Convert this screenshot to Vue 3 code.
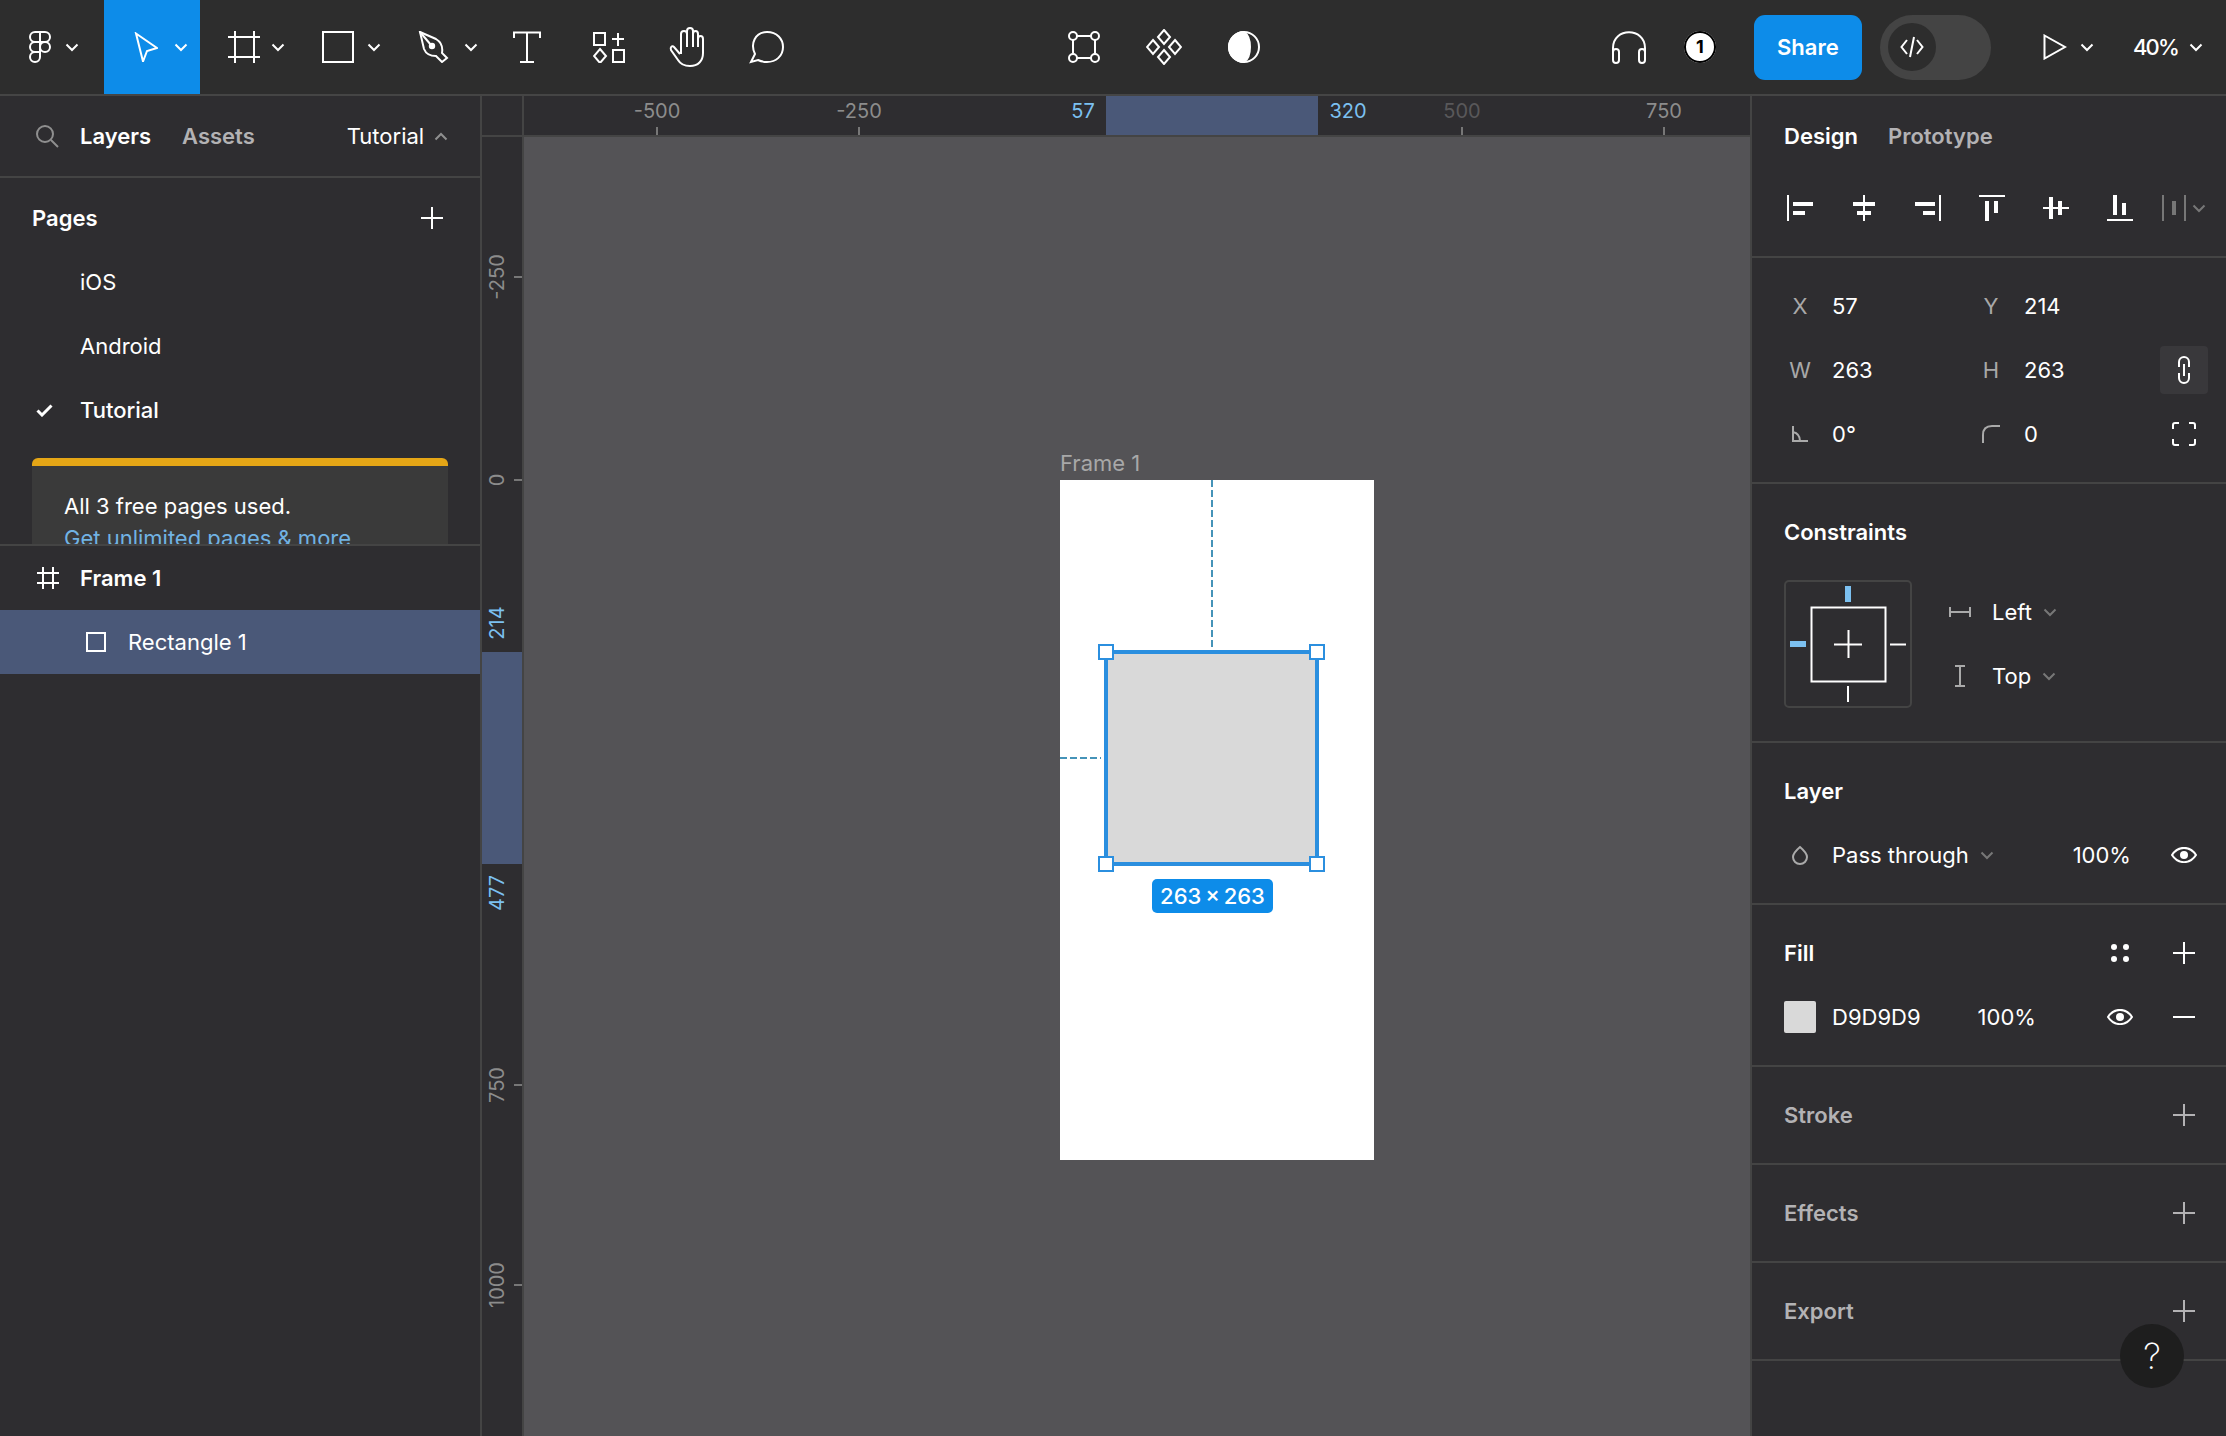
<script setup>
const hMarks = [
  { text: '-500', x: 657, tick: true },
  { text: '-250', x: 859, tick: true },
  { text: '57', x: 1083, tone: 'on' },
  { text: '320', x: 1348, tone: 'on' },
  { text: '500', x: 1462, tick: true, tone: 'dim' },
  { text: '750', x: 1664, tick: true },
]
const vMarks = [
  { text: '-250', y: 277, tick: true },
  { text: '0', y: 480, tick: true },
  { text: '214', y: 623, tone: 'on' },
  { text: '477', y: 893, tone: 'on' },
  { text: '750', y: 1085, tick: true },
  { text: '1000', y: 1285, tick: true },
]
const pages = ['iOS', 'Android', 'Tutorial']
const emptySections = ['Stroke', 'Effects', 'Export']
</script>

<template>
  <div class="app">
    <svg class="defs" width="0" height="0">
      <symbol id="chev" viewBox="0 0 14 9"><path d="M1.5 1.5 7 7l5.500-5.500" fill="none" stroke="currentColor" stroke-width="2" /></symbol>
      <symbol id="plus" viewBox="0 0 22 22"><path d="M11 0v22M0 11h22" fill="none" stroke="currentColor" stroke-width="2" /></symbol>
      <symbol id="eye" viewBox="0 0 26 16">
        <path d="M1 8c6-9.500 18-9.500 24 0-6 9.500-18 9.500-24 0z" fill="none" stroke="currentColor" stroke-width="2" />
        <circle cx="13" cy="8" r="4" fill="currentColor" />
      </symbol>
    </svg>

    <header class="toolbar">
      <div class="tools">
        <div class="tool t-logo">
          <svg class="ico" width="22" height="32" viewBox="0 0 22 32" fill="none" stroke="#fff" stroke-width="2">
            <path d="M11 1H6a5 5 0 0 0 0 10h5zM11 1h5a5 5 0 0 1 0 10h-5zM11 11H6a5 5 0 0 0 0 10h5z" />
            <circle cx="16" cy="16" r="5" />
            <path d="M6 21h5v5a5 5 0 1 1-5-5z" />
          </svg>
          <svg class="chev"><use href="#chev" /></svg>
        </div>
        <div class="tool t-move">
          <svg class="ico" width="24" height="30" viewBox="0 0 24 30" fill="none" stroke="#fff" stroke-width="2">
            <path d="M2 1.500 23 16l-10 3-4 10.500z" />
          </svg>
          <svg class="chev"><use href="#chev" /></svg>
        </div>
        <div class="tool t-frame">
          <svg class="ico" width="32" height="32" viewBox="0 0 32 32" fill="none" stroke="#fff" stroke-width="2">
            <path d="M7 0v32M26 0v32M0 6h32M0 26h32" />
          </svg>
          <svg class="chev"><use href="#chev" /></svg>
        </div>
        <div class="tool t-rect">
          <svg class="ico" width="32" height="32" viewBox="0 0 32 32" fill="none" stroke="#fff" stroke-width="2">
            <rect x="1" y="1" width="30" height="30" />
          </svg>
          <svg class="chev"><use href="#chev" /></svg>
        </div>
        <div class="tool t-pen">
          <svg class="ico" width="32" height="32" viewBox="0 0 32 32" fill="none" stroke="#fff" stroke-width="2">
            <path d="M2 1 18 8c5 3 7 8 6 14l5 5-5 4-6-6c-6 0-10-2-12-7z" />
            <path d="M2 1l11 13" />
            <circle cx="14" cy="15" r="2.200" fill="#fff" />
          </svg>
          <svg class="chev"><use href="#chev" /></svg>
        </div>
        <div class="tool t-text">
          <svg width="28" height="32" viewBox="0 0 28 32" fill="none" stroke="#fff" stroke-width="2">
            <path d="M1 7V1.500h26V7M14 1.500V31M7 31h14" />
          </svg>
        </div>
        <div class="tool t-res">
          <svg width="32" height="32" viewBox="0 0 32 32" fill="none" stroke="#fff" stroke-width="2">
            <rect x="1" y="2" width="11" height="12" />
            <path d="M25 2v13M19 8h12" />
            <path d="M7 18l6 7-6 7-6-7z" />
            <rect x="20" y="19" width="11" height="12" />
          </svg>
        </div>
        <div class="tool t-hand">
          <svg width="36" height="40" viewBox="0 0 36 40" fill="none" stroke="#fff" stroke-width="2">
            <path d="M11 27 5 20c-2-2-4 0-3 3l7 10c3 5 7 6 12 6 8 0 13-5 13-13V12c0-4-5-4-5 0v8M29 20V7c0-4-5-4-5 0v13M24 20V4c0-4-6-4-6 0v16M18 20V7c0-4-6-4-6 0v20" />
          </svg>
        </div>
        <div class="tool t-comment">
          <svg width="36" height="34" viewBox="0 0 36 34" fill="none" stroke="#fff" stroke-width="2">
            <path d="M2 32l4-8C1 14 6 2 18 2c10 0 16 7 16 15 0 9-7 15-16 15-4 0-7-1-9-2z" />
          </svg>
        </div>
      </div>

      <div class="center-tools">
        <svg width="32" height="32" viewBox="0 0 32 32" fill="none" stroke="#fff" stroke-width="2">
          <circle cx="5" cy="5" r="4" /><circle cx="27" cy="5" r="4" /><circle cx="5" cy="27" r="4" /><circle cx="27" cy="27" r="4" />
          <path d="M9 5h14M9 27h14M5 9v14M27 9v14" />
        </svg>
        <svg width="36" height="36" viewBox="0 0 36 36" fill="none" stroke="#fff" stroke-width="2">
          <path d="M18 1l6 7-6 7-6-7zM7 11l6 7-6 7-6-7zM29 11l6 7-6 7-6-7zM18 21l6 7-6 7-6-7z" />
        </svg>
        <svg width="32" height="32" viewBox="0 0 32 32" fill="none" stroke="#fff" stroke-width="2">
          <circle cx="16" cy="16" r="15" />
          <path d="M16 1a15 15 0 0 0 0 30c8-5 8-25 0-30z" fill="#fff" />
        </svg>
      </div>

      <div class="right-tools">
        <svg class="phones" width="38" height="34" viewBox="0 0 38 34" fill="none" stroke="#fff" stroke-width="2">
          <path d="M3 29V18C3-3 35-3 35 18v11" />
          <rect x="3" y="19" width="6" height="14" rx="3" />
          <rect x="29" y="19" width="6" height="14" rx="3" />
        </svg>
        <div class="avatar">1</div>
        <button class="share">Share</button>
        <div class="dev-toggle">
          <span class="knob">
            <svg width="24" height="22" viewBox="0 0 24 22" fill="none" stroke="#fff" stroke-width="2">
              <path d="M7 4 1.500 11 7 18M17 4l5.500 7L17 18M14 1l-4 20" />
            </svg>
          </span>
        </div>
        <svg class="play" width="24" height="26" viewBox="0 0 24 26" fill="none" stroke="#fff" stroke-width="2">
          <path d="M1.500 1.500 22 13 1.500 24.500z" />
        </svg>
        <svg class="chev play-chev"><use href="#chev" /></svg>
        <span class="zoom-val">40%</span>
        <svg class="chev"><use href="#chev" /></svg>
      </div>
    </header>

    <div class="body">
      <aside class="left">
        <div class="tabs">
          <svg class="search" width="24" height="24" viewBox="0 0 24 24" fill="none" stroke="#8f8f8f" stroke-width="2">
            <circle cx="10" cy="10" r="8" /><path d="M16 16l7 7" />
          </svg>
          <span class="tab strong">Layers</span>
          <span class="tab muted assets">Assets</span>
          <span class="page-name">Tutorial</span>
          <svg class="chev up"><use href="#chev" /></svg>
        </div>

        <section class="pages">
          <div class="pages-head">
            <span class="strong">Pages</span>
            <svg class="plus"><use href="#plus" /></svg>
          </div>
          <div v-for="p in pages" :key="p" class="row" :class="{ medium: p === 'Tutorial' }">
            <svg v-if="p === 'Tutorial'" class="check" width="17" height="13" viewBox="0 0 17 13" fill="none" stroke="#fff" stroke-width="3">
              <path d="M1.500 6.500 6 11l9.500-9.500" />
            </svg>
            <span>{{ p }}</span>
          </div>
          <div class="upsell">
            <p>All 3 free pages used.</p>
            <p class="link">Get unlimited pages &amp; more</p>
          </div>
        </section>

        <div class="layer">
          <svg class="layer-ico" width="22" height="22" viewBox="0 0 22 22" fill="none" stroke="#fff" stroke-width="2">
            <path d="M6 0v22M16 0v22M0 6h22M0 16h22" />
          </svg>
          <span class="strong">Frame 1</span>
        </div>
        <div class="layer selected">
          <svg class="rect-ico" width="20" height="20" viewBox="0 0 20 20" fill="none" stroke="#fff" stroke-width="2">
            <rect x="1" y="1" width="18" height="18" />
          </svg>
          <span>Rectangle 1</span>
        </div>
      </aside>

      <main class="work">
        <div class="corner"></div>
        <div class="hruler">
          <div class="hband"></div>
          <template v-for="m in hMarks" :key="m.text">
            <span class="hlabel" :class="m.tone" :style="{ left: m.x - 524 + 'px' }">{{ m.text }}</span>
            <i v-if="m.tick" class="htick" :style="{ left: m.x - 525 + 'px' }"></i>
          </template>
        </div>
        <div class="vruler">
          <div class="vband"></div>
          <template v-for="m in vMarks" :key="m.text">
            <span class="vlabel" :class="m.tone" :style="{ top: m.y - 137 + 'px' }">{{ m.text }}</span>
            <i v-if="m.tick" class="vtick" :style="{ top: m.y - 138 + 'px' }"></i>
          </template>
        </div>

        <div class="canvas">
          <div class="frame">
            <span class="frame-name">Frame 1</span>
            <i class="dash-v"></i>
            <i class="dash-h"></i>
            <div class="rect">
              <i class="handle tl"></i>
              <i class="handle tr"></i>
              <i class="handle bl"></i>
              <i class="handle br"></i>
            </div>
            <span class="size-tag">263 × 263</span>
          </div>
        </div>
      </main>

      <aside class="right">
        <div class="right-head">
          <div class="tabs-r">
            <span class="tab strong">Design</span>
            <span class="tab muted">Prototype</span>
          </div>
          <div class="aligns">
            <svg class="al" viewBox="0 0 26 26" fill="#fff"><rect x="0" y="0" width="2" height="26" /><rect x="6" y="7" width="20" height="4" /><rect x="6" y="16" width="12" height="4" /></svg>
            <svg class="al" viewBox="0 0 26 26" fill="#fff"><rect x="12" y="0" width="2" height="26" /><rect x="2" y="7" width="22" height="4" /><rect x="6" y="16" width="14" height="4" /></svg>
            <svg class="al" viewBox="0 0 26 26" fill="#fff"><rect x="24" y="0" width="2" height="26" /><rect x="0" y="7" width="20" height="4" /><rect x="8" y="16" width="12" height="4" /></svg>
            <svg class="al" viewBox="0 0 26 26" fill="#fff"><rect x="0" y="0" width="26" height="2" /><rect x="6" y="6" width="4" height="20" /><rect x="15" y="6" width="4" height="12" /></svg>
            <svg class="al" viewBox="0 0 26 26" fill="#fff"><rect x="0" y="12" width="26" height="2" /><rect x="6" y="2" width="4" height="22" /><rect x="15" y="6" width="4" height="14" /></svg>
            <svg class="al" viewBox="0 0 26 26" fill="#fff"><rect x="0" y="24" width="26" height="2" /><rect x="6" y="0" width="4" height="20" /><rect x="15" y="8" width="4" height="12" /></svg>
            <div class="dist">
              <svg width="24" height="26" viewBox="0 0 24 26" fill="#777"><rect x="0" y="0" width="2" height="26" /><rect x="10" y="6" width="4" height="14" /><rect x="22" y="0" width="2" height="26" /></svg>
              <svg class="chev dim"><use href="#chev" /></svg>
            </div>
          </div>
        </div>

        <section class="props">
          <span class="lbl">X</span><span class="val">57</span>
          <span class="lbl">Y</span><span class="val">214</span><span></span>

          <span class="lbl">W</span><span class="val">263</span>
          <span class="lbl">H</span><span class="val">263</span>
          <span class="link-btn">
            <svg width="14" height="28" viewBox="0 0 14 28" fill="none" stroke="#fff" stroke-width="2">
              <path d="M2 11V6a5 5 0 0 1 10 0v5M2 17v5a5 5 0 0 0 10 0v-5M7 8v12" />
            </svg>
          </span>

          <span class="lbl">
            <svg width="16" height="16" viewBox="0 0 16 16" fill="none" stroke="#aaa" stroke-width="2">
              <path d="M1 0v15h15M1 6c4 1 7 4 7 9" />
            </svg>
          </span>
          <span class="val">0°</span>
          <span class="lbl">
            <svg width="18" height="18" viewBox="0 0 18 18" fill="none" stroke="#aaa" stroke-width="2">
              <path d="M1 18v-8c0-6 3-9 9-9h8" />
            </svg>
          </span>
          <span class="val">0</span>
          <span class="link-cell">
            <svg width="24" height="24" viewBox="0 0 24 24" fill="none" stroke="#fff" stroke-width="2">
              <path d="M1 7V3q0-2 2-2h4M17 1h4q2 0 2 2v4M23 17v4q0 2-2 2h-4M7 23H3q-2 0-2-2v-4" />
            </svg>
          </span>
        </section>

        <section class="sec constraints">
          <div class="sec-title"><span class="strong">Constraints</span></div>
          <div class="cons-body">
            <svg class="cons-box" width="128" height="128" viewBox="0 0 128 128" fill="none">
              <rect x="1" y="1" width="126" height="126" rx="4" stroke="#444" stroke-width="2" />
              <rect x="27.500" y="27.500" width="74" height="74" stroke="#fff" stroke-width="2" />
              <path d="M50 64.500h28M64.500 50v28M106 64.500h16M64 106v16" stroke="#fff" stroke-width="2" />
              <rect x="61" y="6" width="6" height="16" fill="#7cc0f0" />
              <rect x="6" y="61" width="16" height="6" fill="#7cc0f0" />
            </svg>
            <div class="cons-sides">
              <div class="cons-row">
                <span class="lbl">
                  <svg width="22" height="12" viewBox="0 0 22 12" fill="none" stroke="#aaa" stroke-width="2"><path d="M1 1v10M1 6h20M21 1v10" /></svg>
                </span>
                <span class="val">Left</span>
                <svg class="chev dim"><use href="#chev" /></svg>
              </div>
              <div class="cons-row">
                <span class="lbl">
                  <svg width="12" height="22" viewBox="0 0 12 22" fill="none" stroke="#aaa" stroke-width="2"><path d="M1 1h10M6 1v20M1 21h10" /></svg>
                </span>
                <span class="val">Top</span>
                <svg class="chev dim"><use href="#chev" /></svg>
              </div>
            </div>
          </div>
        </section>

        <section class="sec">
          <div class="sec-title"><span class="strong">Layer</span></div>
          <div class="sec-row">
            <span class="lbl">
              <svg width="16" height="20" viewBox="0 0 16 20" fill="none" stroke="#aaa" stroke-width="2"><path d="M8 2S1 8 1 12a7 7 0 0 0 14 0c0-4-7-10-7-10z" /></svg>
            </span>
            <span class="val pass">Pass through</span>
            <svg class="chev dim"><use href="#chev" /></svg>
            <span class="val pct">100%</span>
            <span class="cell-end"><svg class="eye"><use href="#eye" /></svg></span>
          </div>
        </section>

        <section class="sec">
          <div class="sec-title">
            <span class="strong">Fill</span>
            <span class="cell-mid">
              <svg width="18" height="18" viewBox="0 0 18 18" fill="#fff"><circle cx="3" cy="3" r="3" /><circle cx="15" cy="3" r="3" /><circle cx="3" cy="15" r="3" /><circle cx="15" cy="15" r="3" /></svg>
            </span>
            <span class="cell-end"><svg class="plus"><use href="#plus" /></svg></span>
          </div>
          <div class="sec-row">
            <span class="swatch"></span>
            <span class="val hex">D9D9D9</span>
            <span class="val fill-pct">100%</span>
            <span class="cell-mid"><svg class="eye"><use href="#eye" /></svg></span>
            <span class="cell-end"><svg width="22" height="2" viewBox="0 0 22 2"><rect width="22" height="2" fill="#fff" /></svg></span>
          </div>
        </section>

        <section v-for="name in emptySections" :key="name" class="sec">
          <div class="sec-title">
            <span class="strong off">{{ name }}</span>
            <span class="cell-end off-ico"><svg class="plus"><use href="#plus" /></svg></span>
          </div>
        </section>
      </aside>
    </div>

    <button class="help">?</button>
  </div>
</template>

<style>
html,
body {
  margin: 0;
  background: #2e2d30;
}
</style>

<style scoped>
.app {
  position: relative;
  width: 2226px;
  height: 1436px;
  overflow: hidden;
  display: flex;
  flex-direction: column;
  background: #2e2d30;
  color: #fff;
  font-family: Inter, "Noto Sans", sans-serif;
  font-size: 22px;
  line-height: 32px;
}
.defs {
  position: absolute;
}
.strong {
  font-weight: 600;
}
.muted {
  color: #b3b2b4;
  font-weight: 600;
}

/* toolbar */
.toolbar {
  height: 94px;
  flex: none;
  display: flex;
  align-items: center;
  background: #2d2d2d;
  border-bottom: 2px solid #454545;
}
.tools {
  width: 1068px;
  height: 100%;
  display: flex;
}
.tool {
  display: flex;
  align-items: center;
  justify-content: center;
  flex: none;
}
.chev {
  width: 14px;
  height: 9px;
  flex: none;
  color: #fff;
}
.chev.dim {
  color: #777;
}
.t-logo { width: 104px; justify-content: flex-start; padding-left: 29px; gap: 14px; box-sizing: border-box; }
.t-move { width: 96px; background: #0d8ce9; justify-content: flex-start; padding-left: 30px; gap: 16px; box-sizing: border-box; }
.t-frame { width: 96px; justify-content: flex-start; padding-left: 28px; gap: 11px; box-sizing: border-box; }
.t-rect { width: 96px; justify-content: flex-start; padding-left: 26px; gap: 13px; box-sizing: border-box; }
.t-pen { width: 96px; justify-content: flex-start; padding-left: 26px; gap: 14px; box-sizing: border-box; }
.t-text { width: 78px; }
.t-res { width: 80px; margin-left: 3px; }
.t-hand { width: 78px; margin-left: -1px; }
.t-comment { width: 80px; margin-left: 1px; }
.center-tools {
  width: 216px;
  display: flex;
  align-items: center;
  gap: 46px;
}
.right-tools {
  margin-left: auto;
  display: flex;
  align-items: center;
  padding-right: 23px;
}
.avatar {
  width: 32px;
  height: 32px;
  margin-left: 36px;
  border-radius: 50%;
  background: #fff;
  box-shadow: inset 0 0 0 2px #000;
  color: #000;
  font-size: 18px;
  font-weight: 700;
  line-height: 32px;
  text-align: center;
}
.share {
  width: 108px;
  height: 65px;
  margin-left: 38px;
  border: 0;
  border-radius: 11px;
  background: #0d8ce9;
  color: #fff;
  font: 600 22px Inter, sans-serif;
}
.dev-toggle {
  width: 111px;
  height: 65px;
  margin-left: 18px;
  display: flex;
  align-items: center;
  padding-left: 8px;
  box-sizing: border-box;
  border-radius: 33px;
  background: #444;
}
.knob {
  width: 48px;
  height: 48px;
  border-radius: 50%;
  background: #2d2d2d;
  display: flex;
  align-items: center;
  justify-content: center;
}
.play {
  margin-left: 52px;
}
.play-chev {
  margin-left: 13px;
}
.zoom-val {
  margin-left: 39px;
  margin-right: 11px;
  font-weight: 500;
  letter-spacing: -1.800px;
}

/* layout */
.body {
  flex: 1;
  min-height: 0;
  display: flex;
}
.left {
  width: 480px;
  flex: none;
  border-right: 2px solid #444;
}
.right {
  width: 474px;
  flex: none;
  border-left: 2px solid #444;
  position: relative;
  z-index: 1;
}

/* left panel */
.tabs {
  height: 80px;
  display: flex;
  align-items: center;
  border-bottom: 2px solid #444;
  box-sizing: content-box;
}
.search {
  margin-left: 35px;
  margin-right: 21px;
}
.assets {
  margin-left: 31px;
}
.page-name {
  margin-left: 92px;
}
.up {
  margin-left: 10px;
  color: #8f8f8f;
  transform: rotate(180deg);
}
.pages {
  height: 368px;
  overflow: hidden;
  border-bottom: 2px solid #444;
  padding-top: 8px;
  box-sizing: border-box;
}
.pages-head {
  height: 64px;
  padding: 0 37px 0 32px;
  display: flex;
  align-items: center;
  justify-content: space-between;
}
.plus {
  width: 22px;
  height: 22px;
  display: block;
}
.row {
  position: relative;
  height: 64px;
  padding-left: 80px;
  display: flex;
  align-items: center;
}
.medium {
  font-weight: 500;
}
.check {
  position: absolute;
  left: 36px;
}
.upsell {
  margin: 16px 32px 0;
  padding: 24px 32px;
  background: #3a3a3a;
  border-top: 8px solid #e5a616;
  border-radius: 6px 6px 0 0;
}
.upsell p {
  margin: 0;
}
.link {
  color: #71b3e4;
}
.layer {
  height: 64px;
  padding-left: 80px;
  display: flex;
  align-items: center;
  position: relative;
}
.layer.selected {
  background: #4a5878;
  padding-left: 128px;
}
.layer-ico {
  position: absolute;
  left: 37px;
}
.rect-ico {
  position: absolute;
  left: 86px;
}

/* rulers and canvas */
.work {
  flex: 1;
  min-width: 0;
  display: grid;
  grid-template-columns: 42px 1fr;
  grid-template-rows: 41px 1fr;
}
.corner {
  border-right: 2px solid #444;
  border-bottom: 2px solid #444;
}
.hruler {
  position: relative;
  border-bottom: 2px solid #444;
  overflow: hidden;
}
.vruler {
  position: relative;
  border-right: 2px solid #444;
  overflow: hidden;
}
.hband {
  position: absolute;
  left: 582px;
  width: 212px;
  top: 0;
  bottom: 0;
  background: #4a5878;
}
.vband {
  position: absolute;
  top: 515px;
  height: 212px;
  left: 0;
  right: 0;
  background: #4a5878;
}
.hlabel {
  position: absolute;
  top: 0;
  transform: translateX(-50%);
  color: #8c8c8c;
  font-size: 20px;
  line-height: 30px;
}
.htick {
  position: absolute;
  bottom: 0;
  width: 2px;
  height: 8px;
  background: #777;
}
.vlabel {
  position: absolute;
  left: 3px;
  writing-mode: vertical-rl;
  transform: translateY(-50%) rotate(180deg);
  color: #8c8c8c;
  font-size: 20px;
  line-height: 24px;
}
.vtick {
  position: absolute;
  right: 0;
  width: 8px;
  height: 2px;
  background: #777;
}
.on {
  color: #7cc0f0;
}
.dim {
  color: #59585a;
}
.canvas {
  position: relative;
  background: #545356;
  overflow: hidden;
}
.frame {
  position: absolute;
  left: 536px;
  top: 343px;
  width: 314px;
  height: 680px;
  background: #fff;
}
.frame-name {
  position: absolute;
  left: 0;
  top: -33px;
  color: #a8a8a8;
  white-space: nowrap;
}
.dash-v {
  position: absolute;
  left: 151px;
  top: 0;
  width: 2px;
  height: 167px;
  background: repeating-linear-gradient(to bottom, #4593b8 0 7px, transparent 7px 10px);
}
.dash-h {
  position: absolute;
  left: 0;
  top: 277px;
  width: 41px;
  height: 2px;
  background: repeating-linear-gradient(to right, #4593b8 0 7px, transparent 7px 10px);
}
.rect {
  position: absolute;
  left: 44px;
  top: 170px;
  width: 215px;
  height: 216px;
  box-sizing: border-box;
  background: #d9d9d9;
  border: 4px solid #2b8fdf;
}
.handle {
  position: absolute;
  width: 16px;
  height: 16px;
  box-sizing: border-box;
  background: #fff;
  border: 2px solid #2b8fdf;
}
.tl { left: -10px; top: -10px; }
.tr { right: -10px; top: -10px; }
.bl { left: -10px; bottom: -10px; }
.br { right: -10px; bottom: -10px; }
.size-tag {
  position: absolute;
  left: 92px;
  top: 399px;
  width: 121px;
  height: 34px;
  border-radius: 5px;
  background: #0d8ce9;
  color: #fff;
  font-weight: 500;
  line-height: 34px;
  text-align: center;
  word-spacing: -2px;
}

/* right panel */
.right-head {
  border-bottom: 2px solid #444;
  padding-bottom: 16px;
}
.tabs-r {
  height: 80px;
  padding-left: 32px;
  display: flex;
  align-items: center;
  gap: 30px;
}
.aligns {
  height: 64px;
  padding-left: 16px;
  display: flex;
  align-items: center;
}
.al {
  width: 26px;
  height: 26px;
  padding: 0 19px;
  flex: none;
  box-sizing: content-box;
}
.dist {
  display: flex;
  align-items: center;
  gap: 6px;
  margin-left: 10px;
}
.props {
  height: 192px;
  padding: 16px 0;
  border-bottom: 2px solid #444;
  display: grid;
  grid-template-columns: 48px 143px 49px 136px 48px;
  grid-auto-rows: 64px;
  padding-left: 32px;
  align-items: center;
}
.lbl {
  width: 32px;
  display: flex;
  justify-content: center;
  align-items: center;
  color: #a8a8a8;
}
.link-btn {
  width: 48px;
  height: 48px;
  border-radius: 4px;
  background: #39383b;
  display: flex;
  align-items: center;
  justify-content: center;
}
.link-cell {
  display: flex;
  justify-content: center;
}
.sec {
  padding: 16px 18px 16px 32px;
  border-bottom: 2px solid #444;
}
.sec-title,
.sec-row {
  height: 64px;
  display: flex;
  align-items: center;
}
.cell-mid,
.cell-end {
  width: 48px;
  display: flex;
  justify-content: center;
  align-items: center;
  flex: none;
}
.cell-mid {
  margin-left: auto;
  margin-right: 16px;
}
.sec-title > .cell-end:nth-child(2) {
  margin-left: auto;
}
.off {
  color: #b3b2b4;
}
.off-ico {
  color: #b3b2b4;
}
.constraints {
  padding-bottom: 33px;
}
.cons-body {
  margin-top: 16px;
  display: flex;
  gap: 32px;
}
.cons-row {
  height: 64px;
  display: flex;
  align-items: center;
}
.cons-row .val {
  margin-left: 16px;
  margin-right: 11px;
}
.pass {
  margin-left: 16px;
  margin-right: 11px;
}
.pct {
  margin-left: 79px;
  margin-right: auto;
}
.eye {
  width: 26px;
  height: 16px;
  display: block;
}
.swatch {
  width: 32px;
  height: 32px;
  border-radius: 2px;
  background: #d9d9d9;
}
.hex {
  margin-left: 16px;
}
.fill-pct {
  margin-left: 57px;
}
.help {
  position: absolute;
  right: 42px;
  bottom: 48px;
  z-index: 2;
  width: 64px;
  height: 64px;
  border: 0;
  border-radius: 50%;
  background: #1e1e1e;
  color: #fff;
  font: 200 36px Inter, sans-serif;
}
</style>
